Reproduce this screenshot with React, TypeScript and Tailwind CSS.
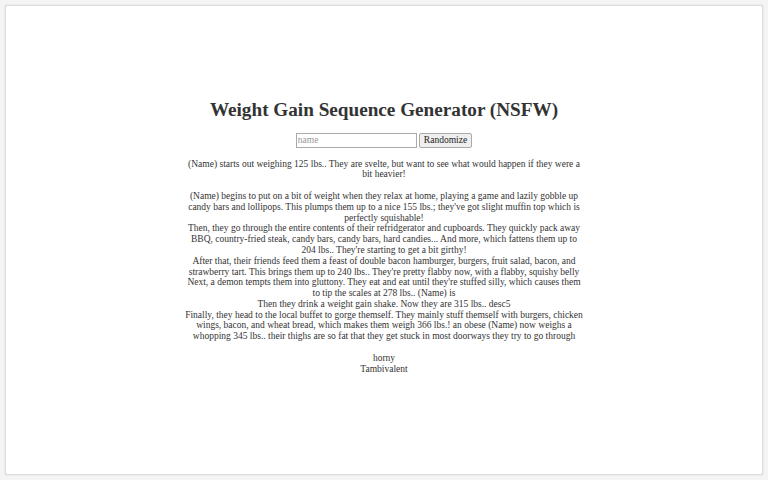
import { useState } from 'react';

const steps = [
  "(Name) begins to put on a bit of weight when they relax at home, playing a game and lazily gobble up candy bars and lollipops. This plumps them up to a nice 155 lbs.; they've got slight muffin top which is perfectly squishable!",
  "Then, they go through the entire contents of their refridgerator and cupboards. They quickly pack away BBQ, country-fried steak, candy bars, candy bars, hard candies... And more, which fattens them up to 204 lbs.. They're starting to get a bit girthy!",
  "After that, their friends feed them a feast of double bacon hamburger, burgers, fruit salad, bacon, and strawberry tart. This brings them up to 240 lbs.. They're pretty flabby now, with a flabby, squishy belly",
  "Next, a demon tempts them into gluttony. They eat and eat until they're stuffed silly, which causes them to tip the scales at 278 lbs.. (Name) is",
  "Then they drink a weight gain shake. Now they are 315 lbs.. desc5",
  "Finally, they head to the local buffet to gorge themself. They mainly stuff themself with burgers, chicken wings, bacon, and wheat bread, which makes them weigh 366 lbs.! an obese (Name) now weighs a whopping 345 lbs.. their thighs are so fat that they get stuck in most doorways they try to go through",
];

const App = () => {
  const [name, setName] = useState('');

  return (
    <div className="h-[480px] w-[768px] bg-[#f4f4f4] p-[5px]" style={{ fontFamily: '"Liberation Serif", "Times New Roman", serif' }}>
      <div className="h-full w-full bg-white border border-[#dcdcdc] shadow-[0_0_2px_rgba(0,0,0,0.08)] flex flex-col items-center justify-center text-[#333] pb-[7px]">
        <h1 className="text-[19.2px] font-bold leading-[22px] mb-[12px]">Weight Gain Sequence Generator (NSFW)</h1>

        <div className="flex items-center gap-[2px] mb-[11px]">
          <input
            value={name}
            onChange={(e) => setName(e.target.value)}
            placeholder="name"
            className="w-[121px] h-[15px] border border-[#aaa] px-[1px] text-[9.5px] text-[#333] placeholder:text-[#999] outline-none"
          />
          <button className="h-[15px] px-[4px] border border-[#aaa] bg-[#efefef] rounded-[2px] text-[9.5px] leading-[13px] text-[#222]">
            Randomize
          </button>
        </div>

        <div className="w-[402px] text-center text-[9.5px] leading-[10.8px]">
          <p>(Name) starts out weighing 125 lbs.. They are svelte, but want to see what would happen if they were a bit heavier!</p>
          <div className="h-[10.8px]" />
          {steps.map((s, i) => (
            <p key={i}>{s}</p>
          ))}
          <div className="h-[10.8px]" />
          <p>horny</p>
          <p>Tambivalent</p>
        </div>
      </div>
    </div>
  );
};

export default App;
